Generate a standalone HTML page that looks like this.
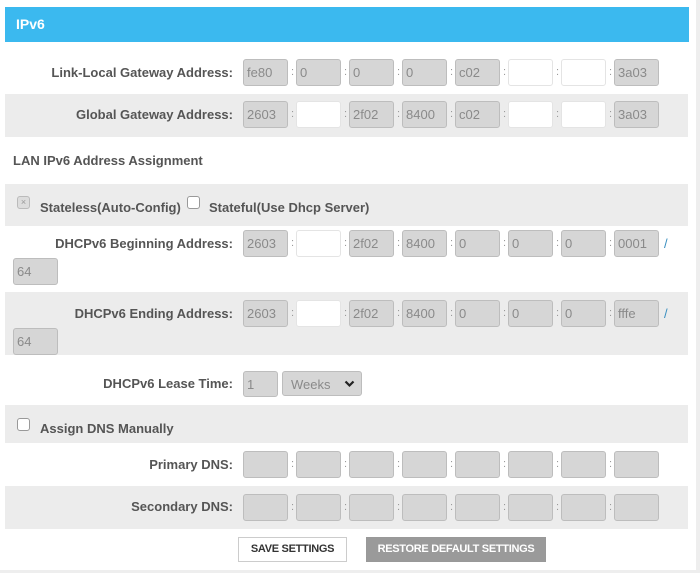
<!DOCTYPE html>
<html><head><style>
*{margin:0;padding:0;box-sizing:border-box}
body{width:700px;height:573px;background:#fff;position:relative;overflow:hidden;font-family:"Liberation Sans",sans-serif;}
.a{position:absolute}
.hdr{left:5px;top:7px;width:684px;height:35px;background:#3bb9ef;color:#fff;font-weight:bold;font-size:14px;padding:9px 0 0 11px}
.band{left:5px;width:683px;background:#ececec}
.lbl{font-weight:bold;font-size:13px;color:#555;text-align:right;width:233px;left:0}
.in{width:45px;height:27px;background:#d6d6d6;border:1px solid #bdbdbd;border-radius:3px;font-size:13px;color:#8a8a8a;padding:5px 0 0 3px}
.bl{background:#fff;border-color:#e4e4e4}
.c{font-size:11px;color:#999}
.cb{width:13px;height:13px;border:1px solid #999;border-radius:3px;background:#fff}
.t{font-weight:bold;font-size:13px;color:#555}
.btn{font-size:11px;font-weight:bold;text-align:center;line-height:23px;letter-spacing:-0.3px}
</style></head><body>
<div class="a" style="right:0;top:0;width:4px;height:573px;background:#eee"></div>
<div class="a" style="left:0;top:570px;width:700px;height:3px;background:#eee"></div>
<div class="a hdr">IPv6</div>
<div class="a band" style="top:94px;height:43px"></div>
<div class="a band" style="top:184px;height:42px"></div>
<div class="a band" style="top:292px;height:63px"></div>
<div class="a band" style="top:405px;height:38px"></div>
<div class="a band" style="top:486px;height:43px"></div>

<div class="a lbl" style="top:65px">Link-Local Gateway Address:</div>
<div class="a lbl" style="top:107px">Global Gateway Address:</div>
<div class="a t" style="left:13px;top:153px">LAN IPv6 Address Assignment</div>
<div class="a cb" style="left:17px;top:196px;background:#ddd;border-color:#bbb;font-size:9px;color:#999;text-align:center;line-height:11px">×</div>
<div class="a t" style="left:40px;top:200px">Stateless(Auto-Config)</div>
<div class="a cb" style="left:187px;top:196px"></div>
<div class="a t" style="left:209px;top:200px">Stateful(Use Dhcp Server)</div>
<div class="a lbl" style="top:236px">DHCPv6 Beginning Address:</div>
<div class="a lbl" style="top:306px">DHCPv6 Ending Address:</div>
<div class="a lbl" style="top:376px">DHCPv6 Lease Time:</div>
<div class="a cb" style="left:17px;top:418px"></div>
<div class="a t" style="left:40px;top:421px">Assign DNS Manually</div>
<div class="a lbl" style="top:457px">Primary DNS:</div>
<div class="a lbl" style="top:499px">Secondary DNS:</div>

<div class="a in" style="left:243px;top:59px">fe80</div><div class="a c" style="left:291px;top:66px">:</div>
<div class="a in" style="left:296px;top:59px">0</div><div class="a c" style="left:344px;top:66px">:</div>
<div class="a in" style="left:349px;top:59px">0</div><div class="a c" style="left:397px;top:66px">:</div>
<div class="a in" style="left:402px;top:59px">0</div><div class="a c" style="left:450px;top:66px">:</div>
<div class="a in" style="left:455px;top:59px">c02</div><div class="a c" style="left:503px;top:66px">:</div>
<div class="a in bl" style="left:508px;top:59px"></div><div class="a c" style="left:556px;top:66px">:</div>
<div class="a in bl" style="left:561px;top:59px"></div><div class="a c" style="left:609px;top:66px">:</div>
<div class="a in" style="left:614px;top:59px">3a03</div>

<div class="a in" style="left:243px;top:101px">2603</div><div class="a c" style="left:291px;top:108px">:</div>
<div class="a in bl" style="left:296px;top:101px"></div><div class="a c" style="left:344px;top:108px">:</div>
<div class="a in" style="left:349px;top:101px">2f02</div><div class="a c" style="left:397px;top:108px">:</div>
<div class="a in" style="left:402px;top:101px">8400</div><div class="a c" style="left:450px;top:108px">:</div>
<div class="a in" style="left:455px;top:101px">c02</div><div class="a c" style="left:503px;top:108px">:</div>
<div class="a in bl" style="left:508px;top:101px"></div><div class="a c" style="left:556px;top:108px">:</div>
<div class="a in bl" style="left:561px;top:101px"></div><div class="a c" style="left:609px;top:108px">:</div>
<div class="a in" style="left:614px;top:101px">3a03</div>

<div class="a in" style="left:243px;top:230px">2603</div><div class="a c" style="left:291px;top:237px">:</div>
<div class="a in bl" style="left:296px;top:230px"></div><div class="a c" style="left:344px;top:237px">:</div>
<div class="a in" style="left:349px;top:230px">2f02</div><div class="a c" style="left:397px;top:237px">:</div>
<div class="a in" style="left:402px;top:230px">8400</div><div class="a c" style="left:450px;top:237px">:</div>
<div class="a in" style="left:455px;top:230px">0</div><div class="a c" style="left:503px;top:237px">:</div>
<div class="a in" style="left:508px;top:230px">0</div><div class="a c" style="left:556px;top:237px">:</div>
<div class="a in" style="left:561px;top:230px">0</div><div class="a c" style="left:609px;top:237px">:</div>
<div class="a in" style="left:614px;top:230px">0001</div>
<div class="a" style="left:664px;top:236px;font-size:13px;color:#3a8fc0">/</div>
<div class="a in" style="left:13px;top:258px">64</div>

<div class="a in" style="left:243px;top:300px">2603</div><div class="a c" style="left:291px;top:307px">:</div>
<div class="a in bl" style="left:296px;top:300px"></div><div class="a c" style="left:344px;top:307px">:</div>
<div class="a in" style="left:349px;top:300px">2f02</div><div class="a c" style="left:397px;top:307px">:</div>
<div class="a in" style="left:402px;top:300px">8400</div><div class="a c" style="left:450px;top:307px">:</div>
<div class="a in" style="left:455px;top:300px">0</div><div class="a c" style="left:503px;top:307px">:</div>
<div class="a in" style="left:508px;top:300px">0</div><div class="a c" style="left:556px;top:307px">:</div>
<div class="a in" style="left:561px;top:300px">0</div><div class="a c" style="left:609px;top:307px">:</div>
<div class="a in" style="left:614px;top:300px">fffe</div>
<div class="a" style="left:664px;top:306px;font-size:13px;color:#3a8fc0">/</div>
<div class="a in" style="left:13px;top:328px">64</div>

<div class="a in" style="left:243px;top:371px;width:35px;height:26px">1</div>
<div class="a in" style="left:282px;top:371px;width:80px;height:25px;padding-left:8px">Weeks
<svg class="a" style="left:61px;top:8px" width="11" height="8" viewBox="0 0 11 8"><path d="M1.5 1.5 L5.5 5.5 L9.5 1.5" stroke="#222" stroke-width="2.2" fill="none"/></svg></div>

<div class="a in" style="left:243px;top:451px"></div><div class="a c" style="left:291px;top:458px">:</div>
<div class="a in" style="left:296px;top:451px"></div><div class="a c" style="left:344px;top:458px">:</div>
<div class="a in" style="left:349px;top:451px"></div><div class="a c" style="left:397px;top:458px">:</div>
<div class="a in" style="left:402px;top:451px"></div><div class="a c" style="left:450px;top:458px">:</div>
<div class="a in" style="left:455px;top:451px"></div><div class="a c" style="left:503px;top:458px">:</div>
<div class="a in" style="left:508px;top:451px"></div><div class="a c" style="left:556px;top:458px">:</div>
<div class="a in" style="left:561px;top:451px"></div><div class="a c" style="left:609px;top:458px">:</div>
<div class="a in" style="left:614px;top:451px"></div>
<div class="a in" style="left:243px;top:494px"></div><div class="a c" style="left:291px;top:501px">:</div>
<div class="a in" style="left:296px;top:494px"></div><div class="a c" style="left:344px;top:501px">:</div>
<div class="a in" style="left:349px;top:494px"></div><div class="a c" style="left:397px;top:501px">:</div>
<div class="a in" style="left:402px;top:494px"></div><div class="a c" style="left:450px;top:501px">:</div>
<div class="a in" style="left:455px;top:494px"></div><div class="a c" style="left:503px;top:501px">:</div>
<div class="a in" style="left:508px;top:494px"></div><div class="a c" style="left:556px;top:501px">:</div>
<div class="a in" style="left:561px;top:494px"></div><div class="a c" style="left:609px;top:501px">:</div>
<div class="a in" style="left:614px;top:494px"></div>

<div class="a btn" style="left:238px;top:537px;width:109px;height:25px;border:1px solid #ccc;background:#fff;color:#333">SAVE SETTINGS</div>
<div class="a btn" style="left:366px;top:537px;width:180px;height:25px;border:1px solid #999;background:#9a9a9a;color:#fff">RESTORE DEFAULT SETTINGS</div>
</body></html>
